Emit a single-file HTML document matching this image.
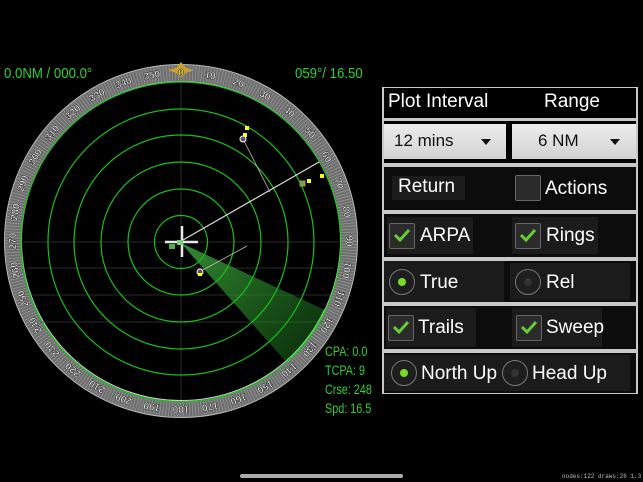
<!DOCTYPE html>
<html><head><meta charset="utf-8"><style>
html,body{margin:0;padding:0;background:#000;width:643px;height:482px;overflow:hidden;font-family:"Liberation Sans",sans-serif;}
.g{position:absolute;color:#2fd12f;white-space:nowrap;transform-origin:0 0;}
.panel{position:absolute;left:382px;top:87px;width:256px;height:307px;background:#c8c8c8;}
.row{position:absolute;left:2px;width:252px;background:#0c0c0c;}
.t{position:absolute;color:#fff;font-size:19px;white-space:nowrap;}
.dd{position:absolute;top:3px;height:35px;background:linear-gradient(#ececec,#d2d2d2);color:#111;font-size:17px;}
.dd span{position:absolute;top:7px;}
.dd i{position:absolute;top:15px;width:0;height:0;border-left:5px solid transparent;border-right:5px solid transparent;border-top:6px solid #111;}
.cb{position:absolute;width:24px;height:24px;background:#2b2b2b;border:1.5px solid #666;border-radius:2px;}
.cell{position:absolute;background:#1b1b1b;}
.rd{position:absolute;width:24px;height:24px;border-radius:50%;background:#1e1e1e;border:1.5px solid #777;}
.rd b{position:absolute;left:8px;top:8px;width:8px;height:8px;border-radius:50%;}
</style></head><body>
<svg width="643" height="482" style="position:absolute;left:0;top:0">
<defs>
<linearGradient id="sw" gradientUnits="userSpaceOnUse" x1="181" y1="243" x2="300" y2="350">
<stop offset="0" stop-color="#3a9a3a" stop-opacity="0.9"/><stop offset="1" stop-color="#1f7a1f" stop-opacity="0.45"/></linearGradient>
</defs>
<!-- bezel -->
<circle cx="181" cy="241" r="168" fill="none" stroke="#6e6e6e" stroke-width="17"/>
<circle cx="181" cy="241" r="168" fill="none" stroke="#9a9a9a" stroke-width="15" stroke-dasharray="0.7 2.23"/>
<circle cx="181" cy="241" r="176.5" fill="none" stroke="#bbb" stroke-width="1"/>
<circle cx="181" cy="241" r="159.5" fill="none" stroke="#ccc" stroke-width="1"/>
<path d="M181 62 L186 68 L194 70 L186 73 L181 78 L176 73 L168 70 L176 68Z" fill="#c9a22a"/>
<g fill="#fff" font-size="10" font-weight="bold" text-anchor="middle" stroke="#222" stroke-width="0.5">
<text x="181" y="76" transform="rotate(0 181 241)" fill="#fff2a0">0</text>
<text x="181" y="76" transform="rotate(10 181 241)">10</text>
<text x="181" y="76" transform="rotate(20 181 241)">20</text>
<text x="181" y="76" transform="rotate(30 181 241)">30</text>
<text x="181" y="76" transform="rotate(40 181 241)">40</text>
<text x="181" y="76" transform="rotate(50 181 241)">50</text>
<text x="181" y="76" transform="rotate(60 181 241)">60</text>
<text x="181" y="76" transform="rotate(70 181 241)">70</text>
<text x="181" y="76" transform="rotate(80 181 241)">80</text>
<text x="181" y="76" transform="rotate(90 181 241)">90</text>
<text x="181" y="76" transform="rotate(100 181 241)">100</text>
<text x="181" y="76" transform="rotate(110 181 241)">110</text>
<text x="181" y="76" transform="rotate(120 181 241)">120</text>
<text x="181" y="76" transform="rotate(130 181 241)">130</text>
<text x="181" y="76" transform="rotate(140 181 241)">140</text>
<text x="181" y="76" transform="rotate(150 181 241)">150</text>
<text x="181" y="76" transform="rotate(160 181 241)">160</text>
<text x="181" y="76" transform="rotate(170 181 241)">170</text>
<text x="181" y="76" transform="rotate(180 181 241)">180</text>
<text x="181" y="76" transform="rotate(190 181 241)">190</text>
<text x="181" y="76" transform="rotate(200 181 241)">200</text>
<text x="181" y="76" transform="rotate(210 181 241)">210</text>
<text x="181" y="76" transform="rotate(220 181 241)">220</text>
<text x="181" y="76" transform="rotate(230 181 241)">230</text>
<text x="181" y="76" transform="rotate(240 181 241)">240</text>
<text x="181" y="76" transform="rotate(250 181 241)">250</text>
<text x="181" y="76" transform="rotate(260 181 241)">260</text>
<text x="181" y="76" transform="rotate(270 181 241)">270</text>
<text x="181" y="76" transform="rotate(280 181 241)">280</text>
<text x="181" y="76" transform="rotate(290 181 241)">290</text>
<text x="181" y="76" transform="rotate(300 181 241)">300</text>
<text x="181" y="76" transform="rotate(310 181 241)">310</text>
<text x="181" y="76" transform="rotate(320 181 241)">320</text>
<text x="181" y="76" transform="rotate(330 181 241)">330</text>
<text x="181" y="76" transform="rotate(340 181 241)">340</text>
<text x="181" y="76" transform="rotate(350 181 241)">350</text>
</g>
<!-- grid -->
<g stroke="#3a3a3a" stroke-width="0.8">
<line x1="21" y1="242" x2="341" y2="242"/>
<line x1="28" y1="268" x2="334" y2="268"/>
<line x1="32" y1="295" x2="330" y2="295"/>
<line x1="40" y1="322" x2="322" y2="322"/>
<line x1="181" y1="82" x2="181" y2="400"/>
</g>
<!-- sweep -->
<path d="M181 243 L325 310 A160 160 0 0 1 286 362 Z" fill="url(#sw)"/>
<path d="M325 310 A160 160 0 0 1 286 362" fill="none" stroke="#7fe07f" stroke-width="2.5" opacity="0.7"/>
<!-- rings -->
<g fill="none" stroke="#19c019" stroke-width="1.2">
<circle cx="181" cy="242" r="26.5"/><circle cx="181" cy="242" r="53"/><circle cx="181" cy="242" r="80"/>
<circle cx="181" cy="242" r="107"/><circle cx="181" cy="242" r="133"/><circle cx="181" cy="242" r="160"/>
</g>
<!-- lines -->
<line x1="183" y1="240" x2="319" y2="162" stroke="#ddd" stroke-width="1.2"/>
<line x1="243" y1="139" x2="270" y2="192" stroke="#bbb" stroke-width="0.8"/>
<line x1="201" y1="271" x2="247" y2="246" stroke="#bbb" stroke-width="0.8"/>
<!-- cross -->
<g stroke="#e8e8e8" stroke-width="2.5"><line x1="165" y1="242" x2="198" y2="242"/><line x1="182" y1="226" x2="182" y2="257"/></g>
<rect x="169" y="244" width="6" height="5" fill="#4caf50"/>
<rect x="177" y="240" width="6" height="5" fill="#7ccf7c"/>
<!-- targets -->
<rect x="245" y="126" width="4" height="4" fill="#ff0"/>
<rect x="243" y="133" width="4" height="4" fill="#ff0"/>
<circle cx="243" cy="139" r="3" fill="#555" stroke="#fff" stroke-width="1"/>
<rect x="320" y="174" width="4" height="4" fill="#ff0"/>
<rect x="307" y="179" width="4" height="4" fill="#ff0"/>
<rect x="300" y="181" width="5" height="5" fill="#4caf50" stroke="#c84" stroke-width="1"/>
<circle cx="200" cy="272" r="3" fill="#555" stroke="#fff" stroke-width="1"/>
<rect x="198" y="273" width="4" height="3" fill="#ff0"/>
<!-- home bar -->
<rect x="240" y="474" width="163" height="4" rx="2" fill="#aaa"/>
</svg>
<div class="g" style="left:4px;top:65px;font-size:15px;transform:scaleX(0.88)">0.0NM / 000.0°</div>
<div class="g" style="left:295px;top:65px;font-size:15px;transform:scaleX(0.88)">059°/ 16.50</div>
<div class="g" style="left:325px;top:342px;font-size:13.5px;line-height:19px;transform:scaleX(0.8)">CPA: 0.0<br>TCPA: 9<br>Crse: 248<br>Spd: 16.5</div>
<div style="position:absolute;left:562px;top:473px;color:#bbb;font-size:6px;font-family:'Liberation Mono',monospace;white-space:nowrap">nodes:122 draws:26 1.3 fps</div>

<div class="panel">
 <div class="row" style="top:1px;height:30px;background:#000">
  <div class="t" style="left:4px;top:3px">Plot Interval</div>
  <div class="t" style="left:160px;top:3px">Range</div>
 </div>
 <div class="row" style="top:34px;height:42px;background:#000">
  <div class="dd" style="left:0;width:122px"><span style="left:10px">12 mins</span><i style="left:97px"></i></div>
  <div class="dd" style="left:128px;width:124px"><span style="left:26px">6 NM</span><i style="left:98px"></i></div>
 </div>
 <div class="row" style="top:80px;height:43px">
  <div class="cell" style="left:8px;top:9px;width:73px;height:24px"></div>
  <div class="t" style="left:14px;top:9px">Return</div>
  <div class="cb" style="left:131px;top:8px"></div>
  <div class="t" style="left:161px;top:11px">Actions</div>
 </div>
 <div class="row" style="top:127px;height:43px">
  <div class="cell" style="left:3px;top:3px;width:86px;height:37px"></div>
  <div class="cb" style="left:5px;top:9px"></div><svg style="position:absolute;left:9px;top:14px" width="18" height="14"><path d="M2 7 L7 12 L16 2" stroke="#6c3" stroke-width="3" fill="none"/></svg>
  <div class="t" style="left:36px;top:11px">ARPA</div>
  <div class="cell" style="left:128px;top:3px;width:86px;height:37px"></div>
  <div class="cb" style="left:131px;top:9px"></div><svg style="position:absolute;left:135px;top:14px" width="18" height="14"><path d="M2 7 L7 12 L16 2" stroke="#6c3" stroke-width="3" fill="none"/></svg>
  <div class="t" style="left:162px;top:11px">Rings</div>
 </div>
 <div class="row" style="top:174px;height:41px">
  <div class="cell" style="left:0;top:0;width:120px;height:41px"></div>
  <div class="cell" style="left:126px;top:2px;width:120px;height:37px"></div>
  <div class="rd" style="left:5px;top:8px"><b style="background:#7d2"></b></div>
  <div class="t" style="left:36px;top:11px">True</div>
  <div class="rd" style="left:131px;top:8px"><b style="background:#333"></b></div>
  <div class="t" style="left:162px;top:11px">Rel</div>
 </div>
 <div class="row" style="top:219px;height:43px">
  <div class="cell" style="left:2px;top:2px;width:90px;height:39px"></div>
  <div class="cb" style="left:4px;top:9px"></div><svg style="position:absolute;left:8px;top:14px" width="18" height="14"><path d="M2 7 L7 12 L16 2" stroke="#6c3" stroke-width="3" fill="none"/></svg>
  <div class="t" style="left:34px;top:11px">Trails</div>
  <div class="cell" style="left:128px;top:2px;width:90px;height:39px"></div>
  <div class="cb" style="left:132px;top:9px"></div><svg style="position:absolute;left:136px;top:14px" width="18" height="14"><path d="M2 7 L7 12 L16 2" stroke="#6c3" stroke-width="3" fill="none"/></svg>
  <div class="t" style="left:162px;top:11px">Sweep</div>
 </div>
 <div class="row" style="top:266px;height:40px">
  <div class="cell" style="left:0;top:2px;width:246px;height:36px"></div>
  <div class="rd" style="left:7px;top:7px"><b style="background:#7d2"></b></div>
  <div class="t" style="left:37px;top:10px">North Up</div>
  <div class="rd" style="left:118px;top:7px"><b style="background:#333"></b></div>
  <div class="t" style="left:148px;top:10px">Head Up</div>
 </div>
</div>
</body></html>
